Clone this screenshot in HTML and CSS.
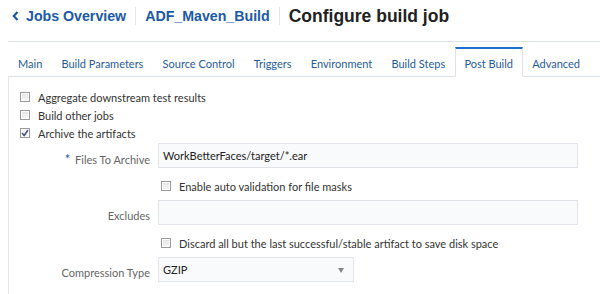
FILE: index.html
```html
<!DOCTYPE html>
<html lang="en">
<head>
  <meta charset="UTF-8">
  <title>Configure build job</title>
  <link rel="stylesheet" href="styles.css">
</head>
<body>
  <div class="crumbs">
    <a class="crumb back" href="#"><svg class="chev" width="7" height="10" viewBox="0 0 7 10"><path d="M5.5 1 L1.8 5 L5.5 9" fill="none" stroke="#1a5aa6" stroke-width="2.2"/></svg>Jobs Overview</a>
    <a class="crumb" href="#">ADF_Maven_Build</a>
    <span class="crumb current">Configure build job</span>
  </div>

  <ul class="tabs">
    <li>Main</li>
    <li>Build Parameters</li>
    <li>Source Control</li>
    <li>Triggers</li>
    <li>Environment</li>
    <li>Build Steps</li>
    <li class="active">Post Build</li>
    <li>Advanced</li>
  </ul>

  <div class="panel">
    <label class="check"><span class="box"></span>Aggregate downstream test results</label>
    <label class="check"><span class="box"></span>Build other jobs</label>
    <label class="check"><span class="box checked"><svg width="8" height="8" viewBox="0 0 8 8"><path d="M1 4 L3.2 6.5 L7 1" fill="none" stroke="#3b4f8a" stroke-width="1.4"/></svg></span>Archive the artifacts</label>

    <div class="row first">
      <div class="label"><span class="req">*</span> Files To Archive</div>
      <div class="input">WorkBetterFaces/target/*.ear</div>
    </div>
    <div class="row sub">
      <div class="label"></div>
      <label class="check"><span class="box"></span>Enable auto validation for file masks</label>
    </div>
    <div class="row">
      <div class="label">Excludes</div>
      <div class="input"></div>
    </div>
    <div class="row sub">
      <div class="label"></div>
      <label class="check"><span class="box"></span>Discard all but the last successful/stable artifact to save disk space</label>
    </div>
    <div class="row">
      <div class="label">Compression Type</div>
      <div class="select">GZIP<span class="caret"></span></div>
    </div>
  </div>
</body>
</html>
```

FILE: styles.css
```css
body {
  margin: 0 0 0 8px;
  font-family: Lato, "Open Sans", sans-serif;
  font-size: 11px;
  color: #333;
  background: #fff;
  overflow: hidden;
}

.crumbs {
  display: flex;
  align-items: center;
  height: 32px;
  padding-bottom: 9px;
  border-bottom: 1px solid #dde2e8;
  font-family: "Liberation Sans", Arial, sans-serif;
  font-weight: bold;
  white-space: nowrap;
}

.crumb {
  padding: 0 9px;
  line-height: 18px;
  font-size: 14.2px;
  color: #1a5aa6;
  text-decoration: none;
  border-left: 1px solid #e3e6ea;
}

.crumb.back {
  border-left: none;
  padding-left: 4px;
}

.chev {
  margin-right: 7px;
  vertical-align: 0;
}

.crumb.current {
  font-size: 17.5px;
  color: #222;
}

.tabs {
  display: flex;
  list-style: none;
  margin: 5px 0 0 0;
  padding: 0;
  border-bottom: 1px solid #dde2e8;
  white-space: nowrap;
}

.tabs li {
  padding: 7px 8.6px 4px;
  line-height: 16px;
  color: #1f5c99;
  border: 1px solid transparent;
  border-top: 2px solid transparent;
  margin-bottom: -1px;
}

.tabs li:first-child {
  padding-left: 9px;
}

.tabs li.active {
  border-color: #dde2e8;
  border-top-color: #1d6fd1;
  border-bottom-color: #fff;
  background: #fff;
}

.panel {
  border-left: 1px solid #e3e6ea;
  padding: 11px 0 0 11px;
  height: 206px;
}

.check {
  display: flex;
  align-items: center;
  height: 18px;
  color: #333;
  white-space: nowrap;
}

.box {
  display: inline-flex;
  align-items: center;
  justify-content: center;
  width: 8px;
  height: 8px;
  margin-right: 8px;
  border: 1px solid #9a9a9a;
  background: linear-gradient(#e4e4e4, #f6f6f6);
  box-shadow: inset 0 0 0 1px #fff;
}

.box.checked {
  background: #f4f4f4;
}

.row {
  display: flex;
  align-items: center;
  margin-top: 5px;
}

.row.first {
  margin-top: 1px;
}

.row.sub {
  margin-top: 9px;
  margin-bottom: 4px;
}

.label {
  width: 130px;
  flex: none;
  text-align: right;
  padding: 6px 8px 0 0;
  color: #666;
}

.row.sub .label {
  padding-top: 0;
}

.req {
  color: #1f5c99;
  font-size: 13px;
  margin-right: 2px;
}

.row .check .box {
  margin-left: 3px;
}

.input {
  flex: none;
  box-sizing: border-box;
  width: 420px;
  height: 25px;
  line-height: 23px;
  padding: 0 4px;
  border: 1px solid #e0e4e9;
  background: #f9fafc;
  color: #222;
}

.select {
  position: relative;
  box-sizing: border-box;
  width: 196px;
  height: 25px;
  line-height: 23px;
  padding: 0 8px 0 4px;
  border: 1px solid #e0e4e9;
  background: #f9fafc;
  color: #222;
}

.caret {
  position: absolute;
  right: 9px;
  top: 10px;
  border-left: 3.5px solid transparent;
  border-right: 3.5px solid transparent;
  border-top: 5px solid #888;
}
```
